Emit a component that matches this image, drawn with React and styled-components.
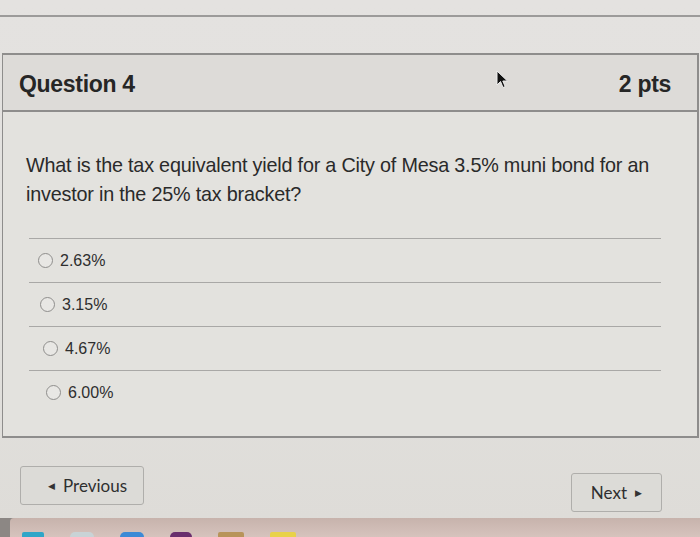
import React from "react";
import styled, { createGlobalStyle } from "styled-components";

const Global = createGlobalStyle`
  html, body { margin: 0; padding: 0; }
  body {
    width: 700px;
    height: 537px;
    overflow: hidden;
    background: #e2e0dd;
    font-family: "Liberation Sans", Arial, sans-serif;
  }
`;

const Page = styled.div`
  width: 700px;
  height: 537px;
  display: flex;
  flex-direction: column;
  overflow: hidden;
`;

const Screen = styled.div`
  height: 518px;
  flex: none;
  position: relative;
  background: linear-gradient(180deg, #e4e2e0 0%, #e2e1de 60%, #dedcd8 100%);
  display: flex;
  flex-direction: column;
  padding-top: 15px;
  box-sizing: border-box;
`;

const TopRule = styled.div`
  border-top: 2px solid #9c9b9a;
`;

const Card = styled.section`
  margin: 36px 0 0 2px;
  width: 694px;
  border: 1px solid #8e8d8c;
  border-right-width: 2px;
  border-top-width: 2px;
  border-bottom-width: 2px;
`;

const Header = styled.header`
  height: 57px;
  box-sizing: border-box;
  background: #dddbd8;
  border-bottom: 2px solid #8e8d8c;
  display: flex;
  align-items: center;
  justify-content: space-between;
  padding: 4px 26px 0 16px;
`;

const Title = styled.h2`
  margin: 0;
  font-family: "Liberation Sans", Arial, sans-serif;
  font-weight: 700;
  font-size: 23px;
  letter-spacing: -0.3px;
  color: #262626;
`;

const Points = styled(Title).attrs({ as: "span" })``;

const Body = styled.div`
  background: #e3e2de;
  padding: 39px 36px 22px 23px;
`;

const Prompt = styled.p`
  margin: 0 0 29px;
  font-family: "Liberation Sans", Arial, sans-serif;
  font-size: 19.8px;
  line-height: 29px;
  color: #2a2a2a;
  letter-spacing: -0.2px;
`;

const Answers = styled.ul`
  list-style: none;
  margin: 0 0 0 3px;
  padding: 0;
`;

const Answer = styled.li`
  height: 44px;
  box-sizing: border-box;
  border-top: 1px solid #a9a8a6;
  display: flex;
  align-items: center;
  gap: 7px;
  padding-left: ${(p) => p.$indent}px;
  font-size: 16px;
  color: #2e2e2e;
`;

const Radio = styled.span`
  width: 15px;
  height: 15px;
  border-radius: 50%;
  border: 1px solid #8f8e8c;
  background: #e8e7e4;
  box-sizing: border-box;
  flex: none;
`;

const Nav = styled.nav`
  display: flex;
  justify-content: space-between;
  align-items: flex-start;
  padding: 28px 38px 0 20px;
`;

const NavButton = styled.button`
  height: 39px;
  margin-top: ${(p) => p.$drop || 0}px;
  padding: 0 ${(p) => p.$padR}px 0 ${(p) => p.$padL}px;
  border: 1px solid #afaeab;
  border-radius: 3px;
  background: #dcdbd7;
  font-family: Lato, "Open Sans", sans-serif;
  font-size: 17px;
  color: #2f2f2f;
  display: flex;
  align-items: center;
  gap: 8px;
`;

const Tri = styled.span`
  font-size: 9px;
  color: #333;
`;

const Cursor = styled.svg`
  position: absolute;
  left: 496px;
  top: 70px;
`;

const Dock = styled.div`
  height: 19px;
  background: #8c8784;
  display: flex;
`;

const DockBar = styled.div`
  flex: 1;
  margin-left: 10px;
  background: linear-gradient(180deg, #c7b3ac 0%, #d6c3bd 100%);
  border-top-left-radius: 4px;
  display: flex;
  align-items: flex-end;
  gap: 26px;
  padding-left: 12px;
`;

const DockIcon = styled.span`
  width: ${(p) => p.$w}px;
  height: 5px;
  border-radius: ${(p) => (p.$round ? "8px 8px 0 0" : "2px 2px 0 0")};
  background: ${(p) => p.$c};
`;

export default function App() {
  const answers = [
    { t: "2.63%", i: 9 },
    { t: "3.15%", i: 11 },
    { t: "4.67%", i: 14 },
    { t: "6.00%", i: 17 },
  ];
  return (
    <Page>
      <Global />
      <Screen>
        <TopRule />
        <Card>
          <Header>
            <Title>Question 4</Title>
            <Points>2 pts</Points>
          </Header>
          <Body>
            <Prompt>
              What is the tax equivalent yield for a City of Mesa 3.5% muni bond for an
              <br />
              investor in the 25% tax bracket?
            </Prompt>
            <Answers>
              {answers.map((a) => (
                <Answer key={a.t} $indent={a.i}>
                  <Radio />
                  {a.t}
                </Answer>
              ))}
            </Answers>
          </Body>
        </Card>
        <Nav>
          <NavButton $padL={27} $padR={16}>
            <Tri>◀</Tri>
            Previous
          </NavButton>
          <NavButton $drop={7} $padL={19} $padR={19}>
            Next
            <Tri>▶</Tri>
          </NavButton>
        </Nav>
        <Cursor width="13" height="19" viewBox="0 0 13 19">
          <path
            d="M1 1 L1 15 L4.5 11.5 L7 17.5 L9.2 16.6 L6.8 11 L11.5 11 Z"
            fill="#111"
            stroke="#eee"
            strokeWidth="1"
          />
        </Cursor>
      </Screen>
      <Dock>
        <DockBar>
          <DockIcon $w={22} $c="#2fa6c8" />
          <DockIcon $w={24} $c="#c9d3d6" $round />
          <DockIcon $w={24} $c="#3c8ad6" $round />
          <DockIcon $w={22} $c="#6a2f6e" $round />
          <DockIcon $w={26} $c="#b8945a" />
          <DockIcon $w={26} $c="#e8d24a" />
        </DockBar>
      </Dock>
    </Page>
  );
}
